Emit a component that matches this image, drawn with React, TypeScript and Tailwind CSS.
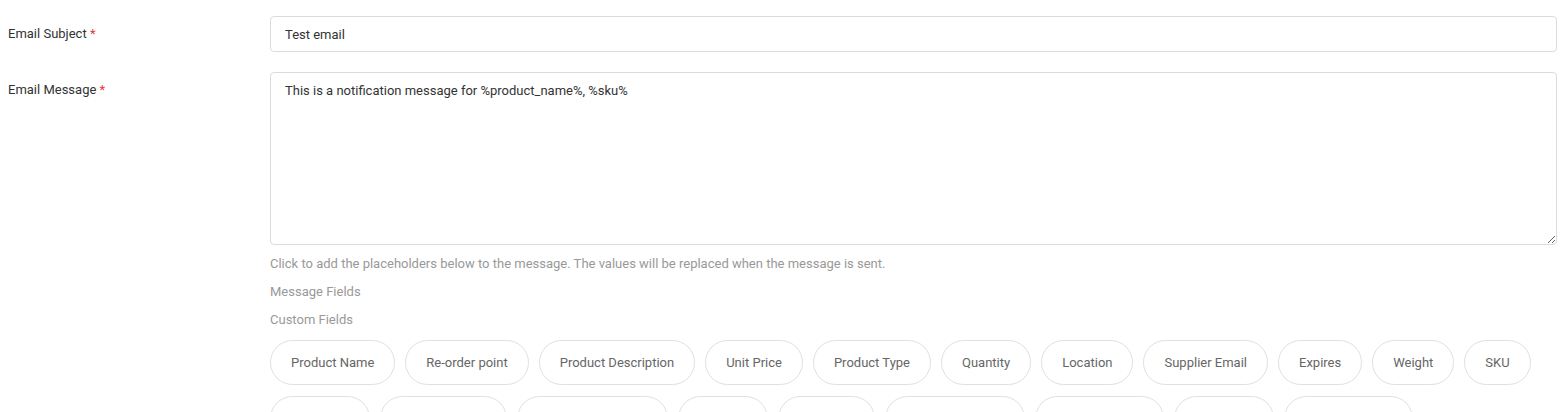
import React from "react";

const FIELDS = [
  "Product Name",
  "Re-order point",
  "Product Description",
  "Unit Price",
  "Product Type",
  "Quantity",
  "Location",
  "Supplier Email",
  "Expires",
  "Weight",
  "SKU",
  "Sale Price",
  "Supplier Name",
  "Purchase Order No",
  "Barcode",
  "Min Level",
  "Supplier Address",
  "Supplier Phone",
  "Max Level",
  "Purchase Price",
];

function Label({ text }: { text: string }) {
  return (
    <label className="text-[13px] text-[#333] leading-[36px]">
      {text} <span className="text-[#e53935]">*</span>
    </label>
  );
}

export default function App() {
  return (
    <div
      className="w-full bg-white pl-2 pr-[7px] pt-4"
      style={{ fontFamily: "Roboto, 'Liberation Sans', sans-serif" }}
    >
      <div className="grid grid-cols-[262px_1fr] gap-y-5">
        <Label text="Email Subject" />
        <input
          type="text"
          defaultValue="Test email"
          className="h-9 w-full rounded border border-[#dcdcdc] px-[14px] text-[13px] text-[#333] outline-none"
        />

        <Label text="Email Message" />
        <div>
          <textarea
            defaultValue="This is a notification message for %product_name%, %sku%"
            className="block h-[173px] w-full resize-y rounded border border-[#dcdcdc] px-[14px] py-[9px] text-[13px] leading-[18px] text-[#333] outline-none"
          />
          <p className="mt-[11px] text-[13px] leading-[16px] text-[#999]">
            Click to add the placeholders below to the message. The values will be replaced when the message is sent.
          </p>
          <p className="mt-3 text-[13px] leading-[16px] text-[#999]">Message Fields</p>
          <p className="mt-3 text-[13px] leading-[16px] text-[#999]">Custom Fields</p>
          <div className="mt-3 flex flex-wrap gap-x-[10px] gap-y-[11px]">
            {FIELDS.map((f) => (
              <button
                key={f}
                type="button"
                className="h-[45px] rounded-full border border-[#e0e0e0] bg-white px-5 text-[13px] text-[#666]"
              >
                {f}
              </button>
            ))}
          </div>
        </div>
      </div>
    </div>
  );
}
